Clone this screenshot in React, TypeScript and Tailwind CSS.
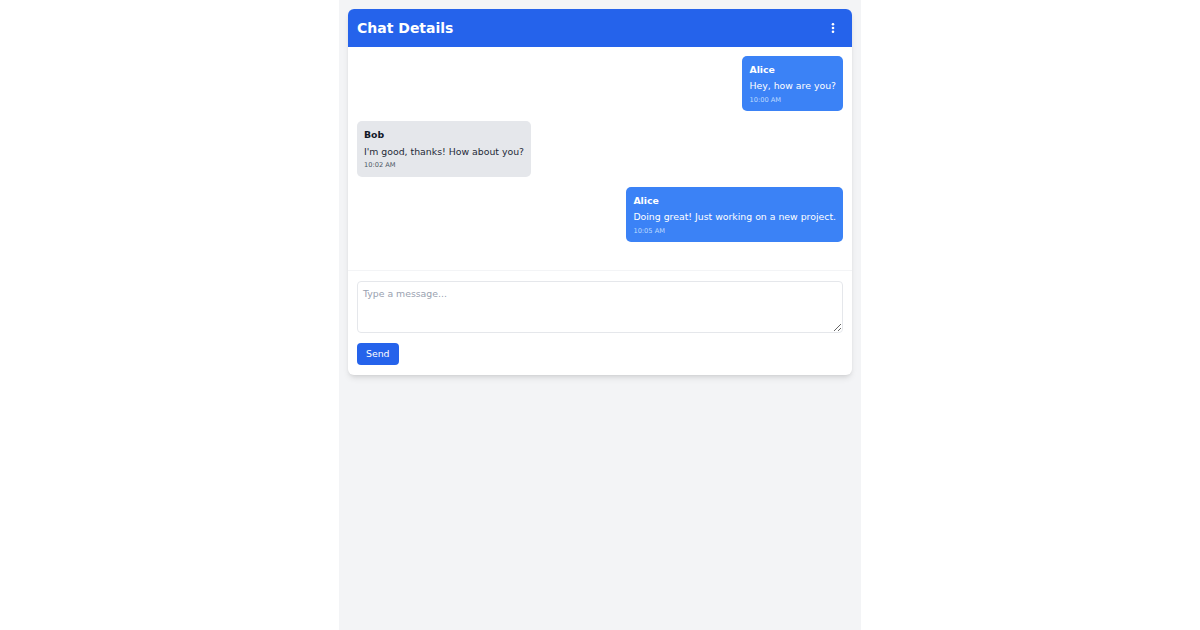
import React from "react";

type Msg = { sender: string; text: string; time: string; mine: boolean };

const messages: Msg[] = [
  { sender: "Alice", text: "Hey, how are you?", time: "10:00 AM", mine: true },
  { sender: "Bob", text: "I'm good, thanks! How about you?", time: "10:02 AM", mine: false },
  { sender: "Alice", text: "Doing great! Just working on a new project.", time: "10:05 AM", mine: true },
];

function DotsIcon() {
  return (
    <svg width="4" height="12" viewBox="0 0 4 12" fill="currentColor" aria-hidden="true">
      <circle cx="2" cy="2.3" r="1.3" />
      <circle cx="2" cy="6" r="1.3" />
      <circle cx="2" cy="9.7" r="1.3" />
    </svg>
  );
}

export default function App() {
  return (
    <div
      className="min-h-screen bg-white flex justify-center"
      style={{ fontFamily: '"DejaVu Sans", "Liberation Sans", sans-serif' }}
    >
      <div className="w-[522px] min-h-screen bg-gray-100 p-[9px]">
        <div className="bg-white rounded-md shadow-md overflow-hidden">
          <div className="h-[38px] bg-[#2563eb] flex items-center justify-between pl-[9px] pr-[17px]">
            <h1 className="text-white font-bold text-[14px] leading-none">Chat Details</h1>
            <button className="text-white flex items-center">
              <DotsIcon />
            </button>
          </div>
          <div className="flex flex-col gap-[10px] px-[9px] pt-[9px] pb-[28.5px]">
            {messages.map((m, i) => (
              <div
                key={i}
                className={
                  m.mine
                    ? "self-end bg-[#3b82f6] text-white rounded-[5px] px-[7px] pt-[7px] pb-[5.5px]"
                    : "self-start bg-[#e5e7eb] text-[#1f2937] rounded-[5px] px-[7px] pt-[7px] pb-[5.5px]"
                }
              >
                <div
                  className={
                    m.mine
                      ? "font-bold text-[9.33px] leading-[13.33px]"
                      : "font-bold text-[9.33px] leading-[13.33px] text-[#111827]"
                  }
                >
                  {m.sender}
                </div>
                <div className="text-[9.33px] leading-[13.33px] mt-[3px] whitespace-nowrap">{m.text}</div>
                <div
                  className={
                    m.mine
                      ? "text-[6.67px] leading-[10.67px] mt-[2.5px] text-[#bfdbfe]"
                      : "text-[6.67px] leading-[10.67px] mt-[2.5px] text-[#4b5563]"
                  }
                >
                  {m.time}
                </div>
              </div>
            ))}
          </div>
          <div className="border-t border-gray-100 px-[9px] pt-[9.5px] pb-[9.5px]">
            <textarea
              className="block w-full h-[52px] border border-gray-200 rounded-[4px] px-[5px] py-[5px] text-[9.33px] leading-[13.33px] text-gray-800 placeholder-gray-400 outline-none"
              placeholder="Type a message..."
            />
            <button className="mt-[10px] h-[22.5px] px-[9px] bg-[#2563eb] text-white text-[9.33px] rounded-[4px]">
              Send
            </button>
          </div>
        </div>
      </div>
    </div>
  );
}
